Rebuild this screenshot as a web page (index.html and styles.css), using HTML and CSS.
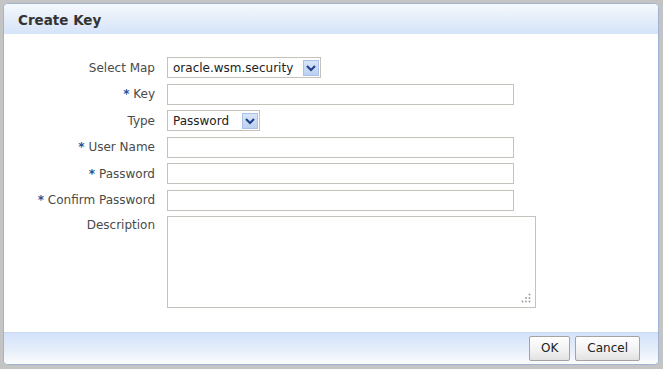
FILE: index.html
```html
<!DOCTYPE html>
<html lang="en">
<head>
  <meta charset="UTF-8">
  <title>Create Key</title>
  <link rel="stylesheet" href="styles.css">
</head>
<body>
  <div class="dialog">
    <div class="dialog-header">Create Key</div>

    <div class="dialog-body">
      <div class="form">
        <label class="label">Select Map</label>
        <div class="select select-map">
          <span class="select-value">oracle.wsm.security</span>
          <span class="select-arrow">
            <svg width="10" height="8" viewBox="0 0 10 8"><path d="M1 2 L5 6 L9 2" fill="none" stroke="#1d3f8a" stroke-width="2"/></svg>
          </span>
        </div>

        <label class="label"><span class="req">*</span> Key</label>
        <input class="field" type="text">

        <label class="label">Type</label>
        <div class="select select-type">
          <span class="select-value">Password</span>
          <span class="select-arrow">
            <svg width="10" height="8" viewBox="0 0 10 8"><path d="M1 2 L5 6 L9 2" fill="none" stroke="#1d3f8a" stroke-width="2"/></svg>
          </span>
        </div>

        <label class="label"><span class="req">*</span> User Name</label>
        <input class="field" type="text">

        <label class="label"><span class="req">*</span> Password</label>
        <input class="field" type="password">

        <label class="label"><span class="req">*</span> Confirm Password</label>
        <input class="field" type="password">

        <label class="label label-top">Description</label>
        <div class="textarea-wrap">
          <textarea class="textarea"></textarea>
          <svg class="grip" width="10" height="10" viewBox="0 0 10 10">
            <circle cx="8.5" cy="1.5" r="0.9" fill="#999"/>
            <circle cx="5" cy="5" r="0.9" fill="#999"/>
            <circle cx="8.5" cy="5" r="0.9" fill="#999"/>
            <circle cx="1.5" cy="8.5" r="0.9" fill="#999"/>
            <circle cx="5" cy="8.5" r="0.9" fill="#999"/>
            <circle cx="8.5" cy="8.5" r="0.9" fill="#999"/>
          </svg>
        </div>
      </div>
    </div>

    <div class="dialog-footer">
      <button class="btn">OK</button>
      <button class="btn">Cancel</button>
    </div>
  </div>
</body>
</html>
```

FILE: styles.css
```css
body {
  margin: 0;
  padding: 3px 2px 3px 3px;
  background: #c4c4c4;
  font-family: 'DejaVu Sans', Tahoma, sans-serif;
  font-size: 12px;
  color: #4a4a4a;
}

.dialog {
  width: 656px;
  height: 362px;
  box-sizing: border-box;
  border: 1px solid #9fb3d1;
  border-radius: 5px;
  background: white;
  display: flex;
  flex-direction: column;
  overflow: hidden;
}

.dialog-header {
  height: 30px;
  box-sizing: border-box;
  padding: 8px 0 0 14px;
  background: linear-gradient(to bottom, #f6f9fe, #e6eef9 45%, #d5e4fa);
  font-size: 13.5px;
  font-weight: bold;
  color: #333;
}

.dialog-body {
  flex: 1;
  padding: 23px 0 0 0;
}

.form {
  display: grid;
  grid-template-columns: 151px auto;
  column-gap: 12px;
  row-gap: 5.5px;
  align-items: center;
  justify-items: start;
}

.label {
  justify-self: end;
  color: #4a4a4a;
  white-space: nowrap;
}

.label-top {
  align-self: start;
  padding-top: 2px;
}

.req {
  color: #2a5298;
  font-weight: bold;
}

.select {
  height: 21px;
  box-sizing: border-box;
  border: 1px solid #c5c2bb;
  background: white;
  display: flex;
  align-items: center;
  padding: 0 1px 0 5px;
  color: #222;
  font-size: 12px;
}

.select-map {
  width: 154px;
}

.select-type {
  width: 93px;
}

.select-value {
  flex: 1;
}

.select-arrow {
  width: 16px;
  height: 16px;
  box-sizing: border-box;
  border: 1px solid #aac0e6;
  background: linear-gradient(to bottom, #d8e5f8, #bcd0f0);
  display: flex;
  align-items: center;
  justify-content: center;
}

.field {
  width: 347px;
  height: 21px;
  box-sizing: border-box;
  border: 1px solid #c5c2bb;
  margin: 0;
  padding: 0 4px;
  font-family: inherit;
}

.textarea-wrap {
  position: relative;
}

.textarea {
  display: block;
  width: 369px;
  height: 92px;
  box-sizing: border-box;
  border: 1px solid #c5c2bb;
  margin: 0;
  resize: none;
  font-family: inherit;
}

.grip {
  position: absolute;
  right: 5px;
  bottom: 5px;
}

.dialog-footer {
  height: 32px;
  box-sizing: border-box;
  border-top: 1px solid #c9d9f2;
  background: linear-gradient(to bottom, #d3e2fb, #e6eef9 55%, #fbfcfe);
  display: flex;
  justify-content: flex-end;
  align-items: center;
  gap: 5px;
  padding: 0 18px 1px 0;
}

.btn {
  height: 25px;
  padding: 0 11px;
  border: 1px solid #a3a3a3;
  border-radius: 2px;
  background: linear-gradient(to bottom, #ffffff, #f1f1f1 60%, #e2e2e2);
  font-family: inherit;
  font-size: 12px;
  color: #222;
}
```
